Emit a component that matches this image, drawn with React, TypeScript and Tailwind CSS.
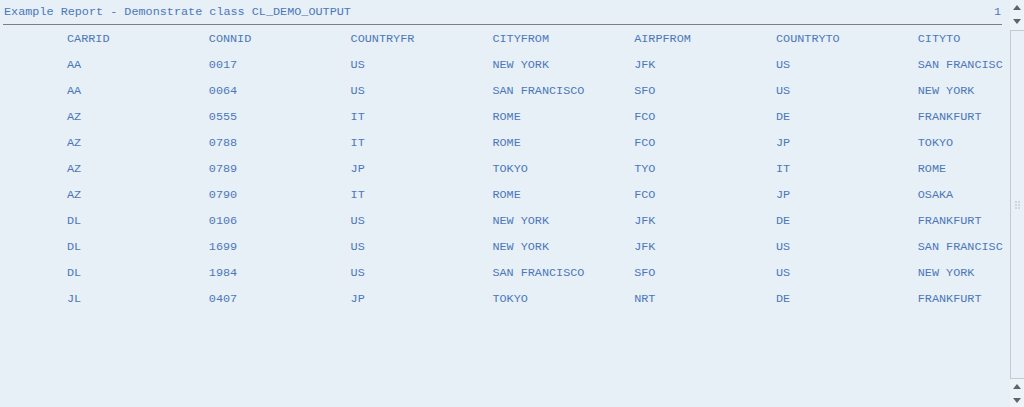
const columns = ['CARRID', 'CONNID', 'COUNTRYFR', 'CITYFROM', 'AIRPFROM', 'COUNTRYTO', 'CITYTO']

const rows = [
  ['AA', '0017', 'US', 'NEW YORK', 'JFK', 'US', 'SAN FRANCISC'],
  ['AA', '0064', 'US', 'SAN FRANCISCO', 'SFO', 'US', 'NEW YORK'],
  ['AZ', '0555', 'IT', 'ROME', 'FCO', 'DE', 'FRANKFURT'],
  ['AZ', '0788', 'IT', 'ROME', 'FCO', 'JP', 'TOKYO'],
  ['AZ', '0789', 'JP', 'TOKYO', 'TYO', 'IT', 'ROME'],
  ['AZ', '0790', 'IT', 'ROME', 'FCO', 'JP', 'OSAKA'],
  ['DL', '0106', 'US', 'NEW YORK', 'JFK', 'DE', 'FRANKFURT'],
  ['DL', '1699', 'US', 'NEW YORK', 'JFK', 'US', 'SAN FRANCISC'],
  ['DL', '1984', 'US', 'SAN FRANCISCO', 'SFO', 'US', 'NEW YORK'],
  ['JL', '0407', 'JP', 'TOKYO', 'NRT', 'DE', 'FRANKFURT'],
]

function Arrow({ up }: { up?: boolean }) {
  return (
    <div className="h-[14px] flex items-center justify-center">
      <svg width="8" height="5" viewBox="0 0 8 5">
        <path d={up ? 'M0 5 L4 0 L8 5 Z' : 'M0 0 L8 0 L4 5 Z'} fill="#5b6570" />
      </svg>
    </div>
  )
}

function Row({ cells }: { cells: string[] }) {
  return (
    <div className="flex h-[26px] items-center pl-[63px] whitespace-pre">
      {cells.map((c, i) => (
        <div key={i} className="w-[141.8px] shrink-0">{c}</div>
      ))}
    </div>
  )
}

export default function App() {
  return (
    <div className="w-[1024px] h-[407px] flex bg-[#e7eff7] text-[#4c78b9] font-['Liberation_Mono',monospace] text-[11.8px] overflow-hidden">
      <div className="w-[1006px] shrink-0 overflow-hidden pl-[4px] pr-[4px]">
        <div className="flex justify-between h-[24px] pt-[1px] items-center pr-[1px]">
          <span className="whitespace-pre">Example Report - Demonstrate class CL_DEMO_OUTPUT</span>
          <span>1</span>
        </div>
        <div className="h-[1px] bg-[#7d7f82] -ml-[1px]" />
        <div className="pt-[2px] w-[998px]">
          <Row cells={columns} />
          {rows.map((r, i) => (
            <Row key={i} cells={r} />
          ))}
        </div>
      </div>
      <div className="w-[4px] shrink-0" />
      <div className="w-[14px] shrink-0 flex flex-col bg-[#eef3f8]">
        <Arrow up />
        <Arrow />
        <div className="flex-1 mt-[2px] border-l border-[#c3cad1] border-t border-b bg-[#e9f0f7] flex items-center justify-center">
          <div className="grid grid-cols-2 gap-[1px]">
            {Array.from({ length: 6 }).map((_, i) => (
              <div key={i} className="w-[2px] h-[2px] bg-[#cfd6dd]" />
            ))}
          </div>
        </div>
        <Arrow up />
        <Arrow />
      </div>
    </div>
  )
}
